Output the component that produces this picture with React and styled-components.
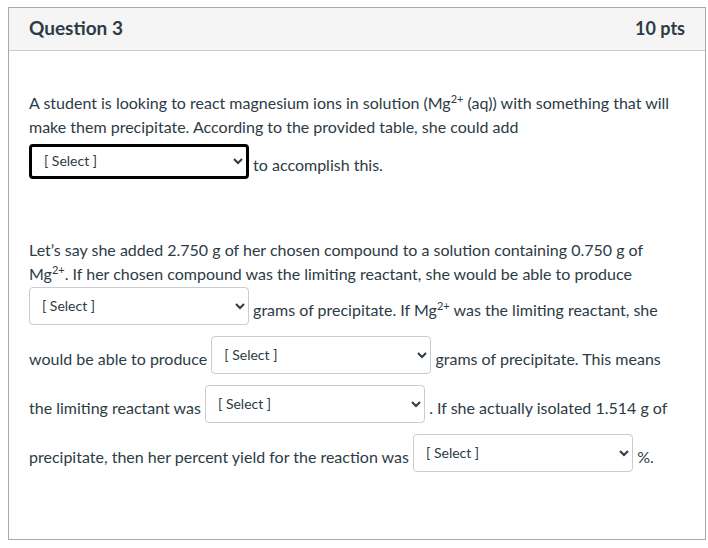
import React from 'react';
import styled, { createGlobalStyle } from 'styled-components';

const GlobalStyle = createGlobalStyle`
    body {
        margin: 0;
        background: #ffffff;
        font-family: Lato, "Open Sans", sans-serif;
        color: #2d3b45;
    }
`

function Dropdown({ focused }) {
    return (
        <Select $focused={focused} defaultValue="">
            <option value="">[ Select ]</option>
        </Select>
    )
}

export default function App() {
    return (
        <>
            <GlobalStyle />
            <Card>
                <Header>
                    <Title $size={19}>Question 3</Title>
                    <Title $size={18}>10 pts</Title>
                </Header>
                <Body>
                    <Para>
                        A student is looking to react magnesium ions in solution (Mg<sup>2+</sup> (aq)) with something that will make them precipitate. According to the provided table, she could add{' '}
                        <Dropdown focused /> to accomplish this.
                    </Para>
                    <Spacer />
                    <Para>
                        Let’s say she added 2.750 g of her chosen compound to a solution containing 0.750 g of Mg<sup>2+</sup>. If her chosen compound was the limiting reactant, she would be able to produce{' '}
                        <Dropdown /> grams of precipitate. If Mg<sup>2+</sup> was the limiting reactant, she would be able to produce{' '}
                        <Dropdown /> grams of precipitate. This means the limiting reactant was{' '}
                        <Dropdown /> . If she actually isolated 1.514 g of precipitate, then her percent yield for the reaction was{' '}
                        <Dropdown /> %.
                    </Para>
                </Body>
            </Card>
        </>
    )
}

const Card = styled.div`
    margin: 7px 2px 0 8px;
    border: 1px solid #a9a9a9;
    background: white;
`

const Header = styled.div`
    height: 43px;
    padding: 0 20px 3px 20px;
    box-sizing: border-box;
    display: flex;
    justify-content: space-between;
    align-items: center;
    background: #f5f5f5;
    border-bottom: 1px solid #c7cdd1;
`

const Title = styled.div`
    font-size: ${props => props.$size}px;
    font-weight: bold;
    color: #2d3b45;
`

const Body = styled.div`
    padding: 40px 20px 57px 20px;
`

const Para = styled.p`
    margin: 0;
    font-size: 16px;
    line-height: 24px;

    & sup {
        font-size: 11px;
        line-height: 0;
        vertical-align: 6px;
    }
`

const Spacer = styled.div`
    height: 56px;
`

const Select = styled.select`
    width: 220px;
    height: ${props => props.$focused ? '35px' : '38px'};
    margin: ${props => props.$focused ? '5px 0 3px 0' : '1px 0 10px 0'};
    padding: 0 8px 2px 8px;
    vertical-align: 5px;
    font-family: Lato, "Open Sans", sans-serif;
    font-size: 14px;
    color: #2d3b45;
    background: white;
    border-radius: 4px;
    border: ${props => props.$focused ? '3px solid #000' : '1px solid #c7cdd1'};
    outline: none;
`
